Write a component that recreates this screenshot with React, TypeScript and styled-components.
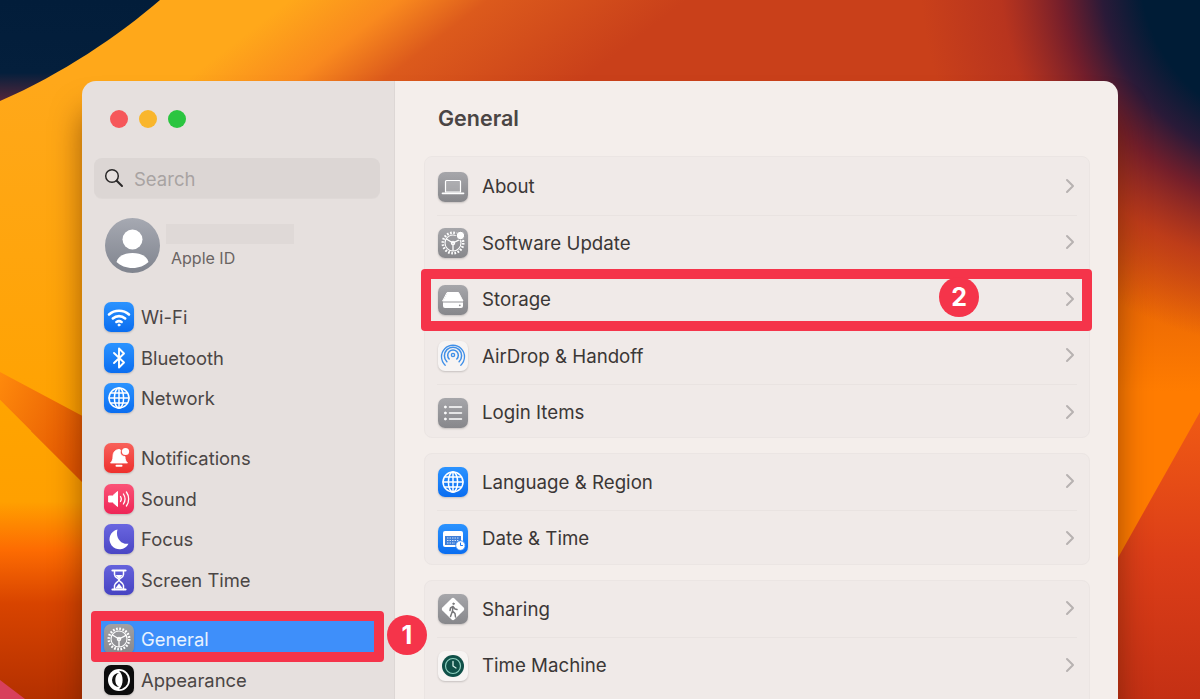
import React from "react";
import styled, { createGlobalStyle } from "styled-components";

const Global = createGlobalStyle`
  html, body { margin: 0; padding: 0; height: 699px; overflow: hidden; background: #c84a18; }
  #root { height: 699px; }
  * { box-sizing: border-box; }
`;

const Desktop = styled.div`
  position: relative;
  width: 1200px;
  height: 699px;
  overflow: hidden;
  font-family: Inter, "Liberation Sans", sans-serif;
`;

const WallpaperSvg = styled.svg`
  position: absolute;
  inset: 0;
  width: 1200px;
  height: 699px;
`;

const Window = styled.div`
  position: absolute;
  left: 82px;
  top: 81px;
  width: 1036px;
  height: 660px;
  display: flex;
  border-radius: 14px;
  overflow: hidden;
  box-shadow: 0 30px 30px rgba(70, 25, 0, 0.5);
`;

const Sidebar = styled.aside`
  width: 313px;
  flex: none;
  background: #e6e0de;
  border-right: 1px solid #ddd7d5;
  padding: 29px 14px 0 12px;
  display: flex;
  flex-direction: column;
`;

const Lights = styled.div`
  display: flex;
  gap: 11px;
  padding-left: 16px;
`;

const Light = styled.span<{ $c: string }>`
  width: 18px;
  height: 18px;
  border-radius: 50%;
  background: ${(p) => p.$c};
`;

const SearchBox = styled.div`
  margin-top: 30px;
  height: 40px;
  border-radius: 8px;
  background: #dcd6d4;
  display: flex;
  align-items: center;
  gap: 10px;
  padding-left: 10px;
  box-shadow: 0 1px 1px rgba(0, 0, 0, 0.03);
`;

const SearchText = styled.span`
  font-size: 18.5px;
  color: #a8a3a2;
  padding-top: 2px;
`;

const Profile = styled.div`
  margin-top: 20px;
  height: 56px;
  display: flex;
  gap: 6px;
  padding-left: 11px;
`;

const ProfileText = styled.div`
  display: flex;
  flex-direction: column;
  padding-top: 6px;
`;

const Redacted = styled.div`
  width: 128px;
  height: 20px;
  background: #dfd9d7;
`;

const AppleId = styled.div`
  margin: 5px 0 0 5px;
  font-size: 16px;
  line-height: 19px;
  color: #6a6463;
`;

const SideGroup = styled.div<{ $gap: number }>`
  margin-top: ${(p) => p.$gap}px;
  display: flex;
  flex-direction: column;
`;

const SideRow = styled.div<{ $active?: boolean }>`
  height: 40.7px;
  display: flex;
  align-items: center;
  gap: 7px;
  padding-left: 10px;
  font-size: 18.4px;
  color: ${(p) => (p.$active ? "#e8f2ff" : "#4b4645")};
  background: ${(p) => (p.$active ? "#3e8ffa" : "transparent")};
`;

const Tile = styled.span<{ $bg: string }>`
  width: 30px;
  height: 30px;
  flex: none;
  border-radius: 7px;
  background: ${(p) => p.$bg};
  box-shadow: 0 1px 2px rgba(0, 0, 0, 0.18);
  display: flex;
  align-items: center;
  justify-content: center;
  svg { display: block; }
`;

const Main = styled.main`
  flex: 1;
  background: #f4eeeb;
  padding: 22px 28px 0 29px;
  display: flex;
  flex-direction: column;
`;

const Title = styled.h1`
  margin: 0 0 23px 14px;
  font-size: 21.5px;
  line-height: 30px;
  font-weight: 600;
  color: #4a4544;
`;

const Card = styled.section<{ $h: number; $pad: number }>`
  height: ${(p) => p.$h}px;
  padding-top: ${(p) => p.$pad}px;
  margin-bottom: 15px;
  background: #f0eae8;
  border: 1px solid #ebe5e3;
  border-radius: 8px;
  flex: none;
`;

const Row = styled.div`
  position: relative;
  height: 56.4px;
  display: flex;
  align-items: center;
  gap: 14px;
  padding: 0 14px 0 13px;
  font-size: 18.7px;
  color: #3b3736;
  & + &::before {
    content: "";
    position: absolute;
    left: 12px;
    right: 12px;
    top: 0;
    height: 1px;
    background: #e9e3e1;
  }
`;

const RowLabel = styled.span`
  flex: 1;
`;

const ChevronIcon = styled.svg`
  display: block;
  margin-top: -2px;
`;

const Highlight = styled.div<{ $x: number; $y: number; $w: number; $h: number }>`
  position: absolute;
  left: ${(p) => p.$x}px;
  top: ${(p) => p.$y}px;
  width: ${(p) => p.$w}px;
  height: ${(p) => p.$h}px;
  border: 10px solid #f5344a;
  border-radius: 4px;
`;

const Badge = styled.div<{ $x: number; $y: number }>`
  position: absolute;
  left: ${(p) => p.$x - 20}px;
  top: ${(p) => p.$y - 20}px;
  width: 40px;
  height: 40px;
  border-radius: 50%;
  background: #f5344a;
  color: #fff;
  font-size: 25px;
  font-weight: 700;
  display: flex;
  align-items: center;
  justify-content: center;
`;

const W = "#fff";
const I = ({ children }: { children: React.ReactNode }) => (
  <svg width="30" height="30" viewBox="0 0 30 30" fill="none" stroke={W} strokeLinecap="round" strokeLinejoin="round">
    {children}
  </svg>
);

const Globe = () => (
  <I>
    <g strokeWidth="1.5">
      <circle cx="15" cy="15" r="10" />
      <ellipse cx="15" cy="15" rx="4.6" ry="10" />
      <path d="M15 5v20M5 15h20M6.5 10h17M6.5 20h17" />
    </g>
  </I>
);

const Gear = ({ dot }: { dot?: boolean }) => (
  <I>
    <circle cx="15" cy="15" r="10.2" strokeWidth="2.6" strokeDasharray="1.7 1.5" strokeLinecap="butt" />
    <circle cx="15" cy="15" r="8" strokeWidth="1.1" />
    <path d="M15 15l-6.6-4M15 15l7-3.6M15 15v7.6" strokeWidth="1.3" />
    <circle cx="15" cy="15" r="1.7" strokeWidth="1.1" />
    {dot && <circle cx="22.5" cy="7.5" r="4.2" fill={W} stroke="#99999d" strokeWidth="1" />}
  </I>
);

const icons = {
  wifi: (
    <I>
      <path d="M5 12.5c5.6-5 14.4-5 20 0" strokeWidth="2.6" />
      <path d="M8.8 16.4c3.6-3 8.8-3 12.4 0" strokeWidth="2.6" />
      <path d="M12.4 20c1.5-1 3.7-1 5.2 0" strokeWidth="2.6" />
      <circle cx="15" cy="23" r="1" fill={W} strokeWidth="1" />
    </I>
  ),
  bluetooth: (
    <I>
      <path d="M10 10l10 9.5-5 5V5.5l5 5L10 20" strokeWidth="1.9" />
    </I>
  ),
  globe: <Globe />,
  bell: (
    <I>
      <path
        d="M15 6.5c-4 0-6 3-6 6.5 0 3.5-1 5.5-2.5 7h17c-1.5-1.5-2.5-3.5-2.5-6.5-3.4 0-5.6-3-4.2-6.2-.5-.5-1-.8-1.8-.8z"
        fill={W}
        strokeWidth="0.8"
      />
      <circle cx="21.5" cy="8.5" r="3.6" fill={W} stroke="none" />
      <path d="M12.5 22.8h5" strokeWidth="2" />
    </I>
  ),
  sound: (
    <I>
      <path d="M5 12h3.5l5-4.5v15l-5-4.5H5z" fill={W} strokeWidth="1" />
      <path d="M16.5 12.5c1 1.5 1 3.5 0 5M19.4 10c2 3 2 7 0 10M22.4 8c3 4 3 10 0 14" strokeWidth="1.3" />
    </I>
  ),
  moon: (
    <I>
      <path d="M13.5 5.5a10 10 0 1 0 11 14.2C17.5 21 11 14 13.5 5.5z" fill={W} stroke="none" />
    </I>
  ),
  hourglass: (
    <I>
      <path d="M8.5 5.5h13M8.5 24.5h13" strokeWidth="2.2" />
      <path d="M10.5 6v3.5c0 3 4.500 4 4.500 5.500s-4.500 2.500-4.500 5.500v4M19.500 6v3.500c0 3-4.500 4-4.500 5.500s4.500 2.500 4.500 5.500v4" strokeWidth="1.500" />
      <path d="M11.500 10h7L15 13.800zM15 18.500l3.800 5h-7.600z" fill={W} stroke="none" />
    </I>
  ),
  gear: <Gear />,
  gearDot: <Gear dot />,
  appearance: (
    <I>
      <circle cx="15" cy="15" r="11" fill={W} stroke="none" />
      <path d="M15 5.800a9.200 9.200 0 0 1 0 18.400c2.600-2.400 3.600-5.800 3.600-9.200s-1-6.800-3.600-9.200z" fill="#111" stroke="none" />
      <path d="M15 8a7 7 0 0 0 0 14c-2.800-1.600-3.700-4.200-3.700-7s.9-5.400 3.700-7z" fill="#111" stroke="none" />
    </I>
  ),
  laptop: (
    <I>
      <path d="M7.500 20V9.500a1 1 0 0 1 1-1h13a1 1 0 0 1 1 1V20z" fill="rgba(255,255,255,0.18)" strokeWidth="1.200" />
      <path d="M4.500 21.300h21" strokeWidth="1.700" />
    </I>
  ),
  storage: (
    <I>
      <path d="M9.500 7.500h11l4.500 8.500H5z" fill={W} stroke={W} strokeWidth="1" />
      <path d="M5 17.500h20v3.500a2 2 0 0 1-2 2H7a2 2 0 0 1-2-2z" fill={W} stroke="none" />
      <circle cx="21.800" cy="20.300" r="0.900" fill="#8e8e92" stroke="none" />
    </I>
  ),
  airdrop: (
    <I>
      <g stroke="#3f8fe8">
        <circle cx="15" cy="14" r="1.600" strokeWidth="1.400" />
        <path d="M11.200 18a5.300 5.300 0 1 1 7.600 0" strokeWidth="1.500" />
        <path d="M8.900 20.800a8.600 8.600 0 1 1 12.200 0" strokeWidth="1.500" />
        <path d="M7.200 24.200a11.500 11.500 0 1 1 15.600 0" strokeWidth="1.300" />
      </g>
    </I>
  ),
  list: (
    <I>
      <path d="M11.500 9h12M11.500 15h12M11.500 21h12" strokeWidth="1.500" />
      <circle cx="7.300" cy="9" r="1" fill={W} strokeWidth="0.800" />
      <circle cx="7.300" cy="15" r="1" fill={W} strokeWidth="0.800" />
      <circle cx="7.300" cy="21" r="1" fill={W} strokeWidth="0.800" />
    </I>
  ),
  calendar: (
    <I>
      <rect x="5" y="7" width="20" height="16" rx="2" fill={W} stroke="none" />
      <rect x="7" y="12" width="16" height="9" fill="#3f7fd8" stroke="none" />
      <path d="M9 14h12M9 16.500h12M9 19h8" stroke="#cfe1fa" strokeWidth="1" strokeDasharray="1.500 1" strokeLinecap="butt" />
      <circle cx="22.500" cy="21.500" r="4.800" fill={W} stroke="#1f7bf2" strokeWidth="0.800" />
      <path d="M22.500 19v2.500h2" stroke="#1f7bf2" strokeWidth="1" />
    </I>
  ),
  sharing: (
    <I>
      <rect x="6.500" y="6.500" width="17" height="17" rx="2" transform="rotate(45 15 15)" fill={W} stroke="none" />
      <g stroke="#77777a" strokeWidth="1.500">
        <circle cx="15.500" cy="9.800" r="0.800" fill="#77777a" strokeWidth="0.800" />
        <path d="M15 12.500l-.5 4.500 2.500 2.500.5 3.500M14.500 17l-2 5.500M15 12.500l-2.500 1.500-.5 2.500M15 12.500l2 2.500 2 .5" />
      </g>
    </I>
  ),
  time: (
    <I>
      <circle cx="15" cy="15" r="11" fill="#0f5048" stroke="none" />
      <circle cx="15" cy="15" r="7.500" stroke="#8fd0c0" strokeWidth="1.200" />
      <path d="M15 10.500V15l3 2" stroke="#d6f0e8" strokeWidth="1.300" />
    </I>
  ),
};

const grey = "linear-gradient(#a6a6aa, #87878b)";
const blue = "linear-gradient(#2b93ff, #0a6df0)";

type Item = { label: string; bg: string; icon: keyof typeof icons };

const sideGroups: { gap: number; items: Item[] }[] = [
  {
    gap: 22.5,
    items: [
      { label: "Wi-Fi", bg: blue, icon: "wifi" },
      { label: "Bluetooth", bg: blue, icon: "bluetooth" },
      { label: "Network", bg: blue, icon: "globe" },
    ],
  },
  {
    gap: 19,
    items: [
      { label: "Notifications", bg: "linear-gradient(#f8615a, #ee2f2c)", icon: "bell" },
      { label: "Sound", bg: "linear-gradient(#fb5276, #ee2556)", icon: "sound" },
      { label: "Focus", bg: "linear-gradient(#6a66e0, #4a46c4)", icon: "moon" },
      { label: "Screen Time", bg: "linear-gradient(#6562dc, #4643c2)", icon: "hourglass" },
    ],
  },
  {
    gap: 18.5,
    items: [
      { label: "General", bg: "linear-gradient(#a0a0a4, #88888c)", icon: "gear" },
      { label: "Appearance", bg: "#0c0c0c", icon: "appearance" },
    ],
  },
];

const cards: { h: number; pad: number; items: Item[] }[] = [
  {
    h: 282,
    pad: 1.75,
    items: [
      { label: "About", bg: grey, icon: "laptop" },
      { label: "Software Update", bg: grey, icon: "gearDot" },
      { label: "Storage", bg: grey, icon: "storage" },
      { label: "AirDrop & Handoff", bg: "#f7f4f3", icon: "airdrop" },
      { label: "Login Items", bg: grey, icon: "list" },
    ],
  },
  {
    h: 112,
    pad: 0,
    items: [
      { label: "Language & Region", bg: blue, icon: "globe" },
      { label: "Date & Time", bg: blue, icon: "calendar" },
    ],
  },
  {
    h: 160,
    pad: 0,
    items: [
      { label: "Sharing", bg: grey, icon: "sharing" },
      { label: "Time Machine", bg: "#f7f4f3", icon: "time" },
    ],
  },
];

const Wallpaper = () => (
  <WallpaperSvg viewBox="0 0 1200 699" aria-hidden="true">
    <defs>
      <linearGradient id="top" gradientUnits="userSpaceOnUse" x1="108" y1="140" x2="256" y2="332">
        <stop offset="0" stopColor="#ffa81a" />
        <stop offset="0.275" stopColor="#f98a1e" />
        <stop offset="0.5" stopColor="#dc5a1c" />
        <stop offset="1" stopColor="#c9401a" />
      </linearGradient>
      <linearGradient id="leftStrip" x1="0" y1="0" x2="0" y2="1">
        <stop offset="0" stopColor="#ffa81a" />
        <stop offset="1" stopColor="#ffa200" />
      </linearGradient>
      <linearGradient id="rightStrip" x1="0" y1="0" x2="0" y2="1">
        <stop offset="0" stopColor="#c9401a" />
        <stop offset="0.13" stopColor="#c9401a" />
        <stop offset="0.33" stopColor="#dc5a08" />
        <stop offset="0.56" stopColor="#ff7c00" />
        <stop offset="1" stopColor="#ff7c00" />
      </linearGradient>
      <radialGradient id="dark" gradientUnits="userSpaceOnUse" cx="1300" cy="-30" r="400">
        <stop offset="0.4" stopColor="#001c36" />
        <stop offset="0.5" stopColor="#2a1a38" />
        <stop offset="0.6" stopColor="#6e1c2c" stopOpacity="0.95" />
        <stop offset="0.75" stopColor="#b02f20" stopOpacity="0.7" />
        <stop offset="0.95" stopColor="#b02f20" stopOpacity="0" />
      </radialGradient>
      <linearGradient id="rbottom" x1="0" y1="0" x2="0" y2="1">
        <stop offset="0" stopColor="#f05a14" />
        <stop offset="0.5" stopColor="#dc3e18" />
        <stop offset="1" stopColor="#c43014" />
      </linearGradient>
      <linearGradient id="navy" x1="0" y1="0" x2="0" y2="1">
        <stop offset="0" stopColor="#021d3a" />
        <stop offset="0.72" stopColor="#041f3c" />
        <stop offset="1" stopColor="#54263a" />
      </linearGradient>
      <linearGradient id="band" x1="0" y1="0" x2="1" y2="0.6">
        <stop offset="0" stopColor="#ff8a0c" />
        <stop offset="1" stopColor="#e25400" />
      </linearGradient>
      <linearGradient id="lower" x1="0" y1="0" x2="0" y2="1">
        <stop offset="0" stopColor="#ffa400" />
        <stop offset="0.34" stopColor="#ffa000" />
        <stop offset="0.5" stopColor="#fd6c02" />
        <stop offset="0.68" stopColor="#d84400" />
        <stop offset="1" stopColor="#b43000" />
      </linearGradient>
    </defs>
    <rect width="1200" height="699" fill="url(#top)" />
    <rect x="0" y="81" width="90" height="350" fill="url(#leftStrip)" />
    <path d="M0 372L90 420V490L0 400Z" fill="url(#band)" />
    <path d="M0 400L90 490V699H0Z" fill="url(#lower)" />
    <path d="M0 680L25 699H0Z" fill="#d8405c" />
    <rect x="1000" y="0" width="200" height="699" fill="url(#rightStrip)" />
    <rect width="1200" height="699" fill="url(#dark)" />
    <path d="M1200 412L1110 572V699H1200Z" fill="url(#rbottom)" />
    <path d="M0 0H160C118 36 62 74 0 101Z" fill="url(#navy)" />
  </WallpaperSvg>
);

const Chevron = () => (
  <ChevronIcon width="10" height="16" viewBox="0 0 10 16" fill="none" stroke="#b7b2b1" strokeWidth="2" strokeLinecap="round" strokeLinejoin="round">
    <path d="M2 2l6 6-6 6" />
  </ChevronIcon>
);

export default function App() {
  return (
    <Desktop>
      <Global />
      <Wallpaper />
      <Window>
        <Sidebar>
          <Lights>
            <Light $c="#f6575a" />
            <Light $c="#f9b62c" />
            <Light $c="#2bc540" />
          </Lights>
          <SearchBox>
            <svg width="20" height="20" viewBox="0 0 20 20" fill="none">
              <circle cx="8" cy="8" r="6.300" fill="#e6e0de" stroke="#2a2828" strokeWidth="1.500" />
              <path d="M12.700 12.700L18 18" stroke="#2a2828" strokeWidth="2" strokeLinecap="round" />
            </svg>
            <SearchText>Search</SearchText>
          </SearchBox>
          <Profile>
            <svg width="55" height="55" viewBox="0 0 55 55">
              <defs>
                <linearGradient id="av" x1="0" y1="0" x2="0" y2="1">
                  <stop offset="0" stopColor="#a6a9b2" />
                  <stop offset="1" stopColor="#80848e" />
                </linearGradient>
                <clipPath id="avc">
                  <circle cx="27.500" cy="27.500" r="27.500" />
                </clipPath>
              </defs>
              <circle cx="27.500" cy="27.500" r="27.500" fill="url(#av)" />
              <g clipPath="url(#avc)">
                <circle cx="27.500" cy="21.500" r="10" fill="#fff" />
                <path d="M11.500 44c1.500-6 8-9 16-9s14.500 3 16 9c-4 3.800-9.500 6-16 6s-12-2.200-16-6z" fill="#fff" />
              </g>
            </svg>
            <ProfileText>
              <Redacted />
              <AppleId>Apple ID</AppleId>
            </ProfileText>
          </Profile>
          {sideGroups.map((g) => (
            <SideGroup key={g.items[0].label} $gap={g.gap}>
              {g.items.map((it) => (
                <SideRow key={it.label} $active={it.label === "General"}>
                  <Tile $bg={it.bg}>{icons[it.icon]}</Tile>
                  <span>{it.label}</span>
                </SideRow>
              ))}
            </SideGroup>
          ))}
        </Sidebar>
        <Main>
          <Title>General</Title>
          {cards.map((c) => (
            <Card key={c.items[0].label} $h={c.h} $pad={c.pad}>
              {c.items.map((it) => (
                <Row key={it.label}>
                  <Tile $bg={it.bg}>{icons[it.icon]}</Tile>
                  <RowLabel>{it.label}</RowLabel>
                  <Chevron />
                </Row>
              ))}
            </Card>
          ))}
        </Main>
      </Window>
      <Highlight $x={91} $y={611} $w={293} $h={51} />
      <Badge $x={407} $y={635}>1</Badge>
      <Highlight $x={421} $y={269} $w={671} $h={62} />
      <Badge $x={959} $y={297}>2</Badge>
    </Desktop>
  );
}
